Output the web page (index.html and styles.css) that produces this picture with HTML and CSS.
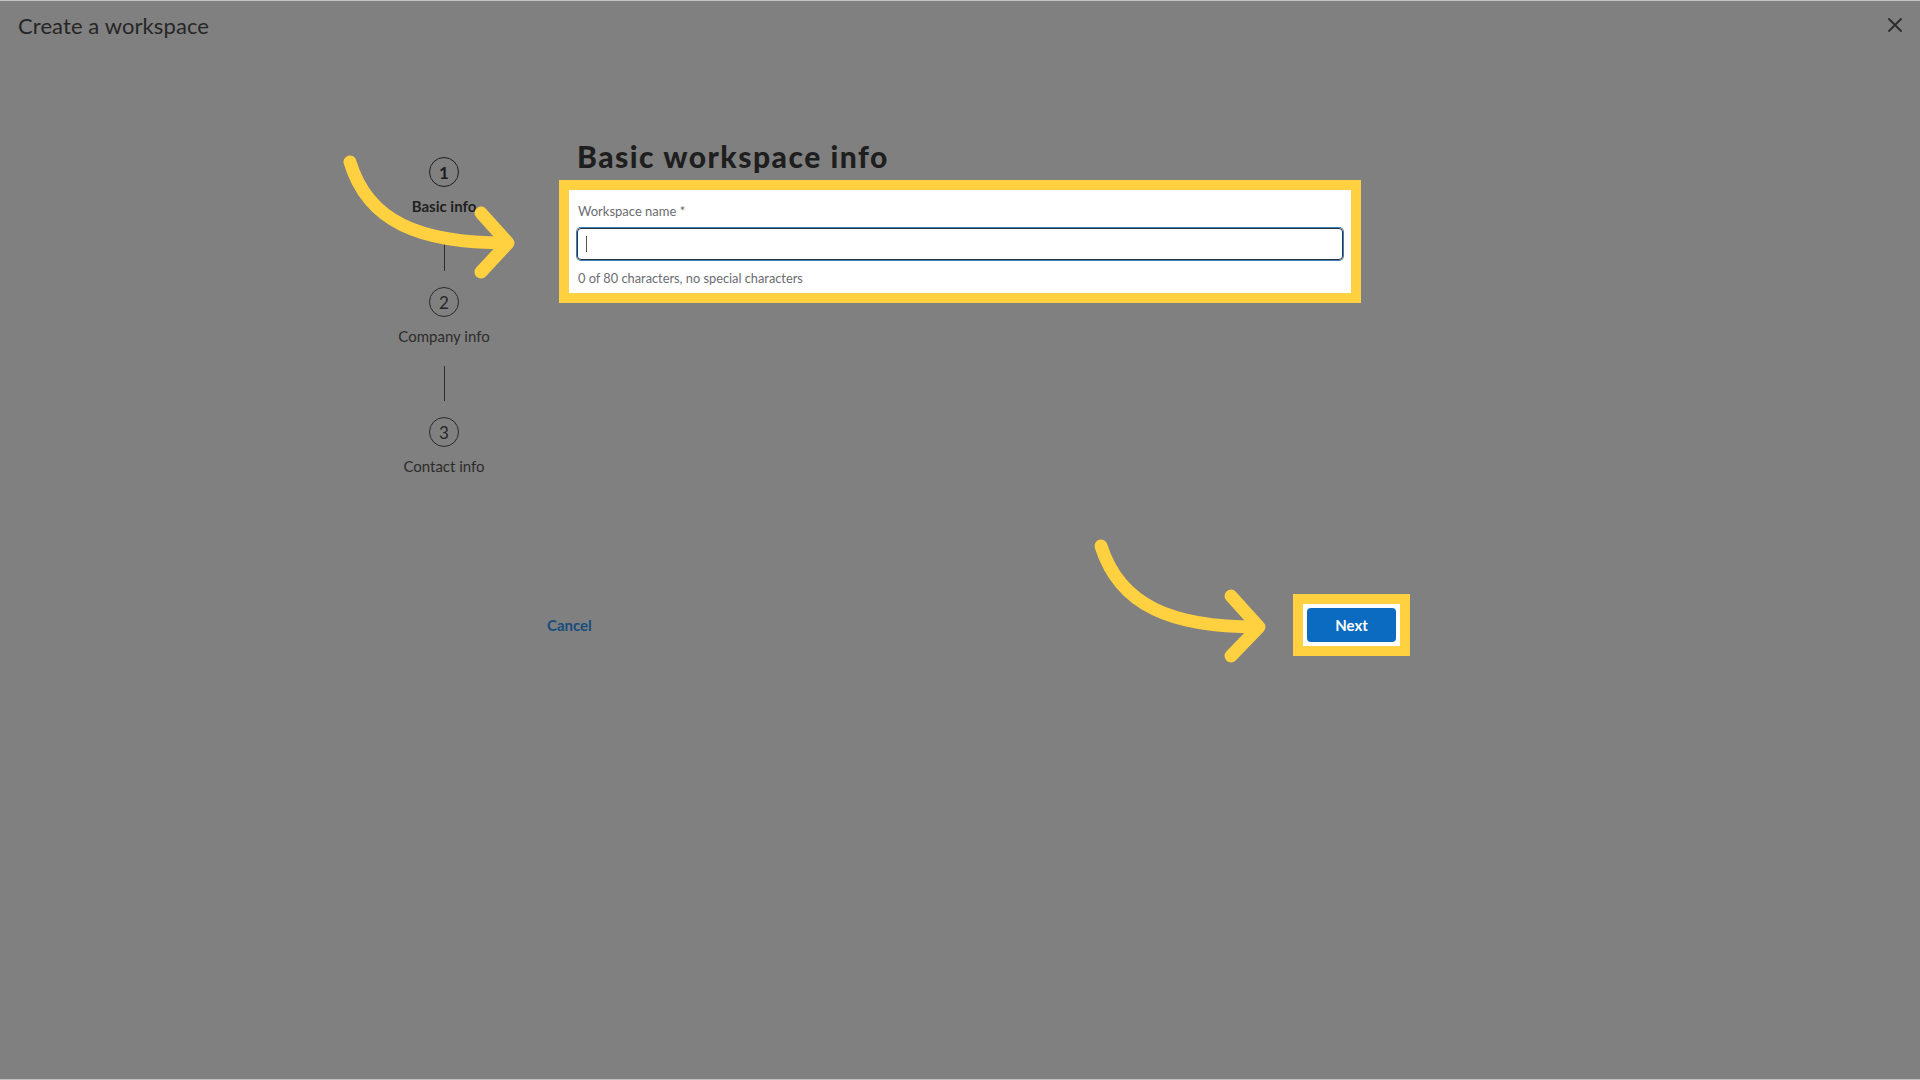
FILE: index.html
```html
<!DOCTYPE html>
<html lang="en">
<head>
<meta charset="utf-8">
<title>Create a workspace</title>
<link rel="stylesheet" href="styles.css">
</head>
<body>
<div class="page">
  <header class="topbar">
    <h1 class="title">Create a workspace</h1>
    <button class="close" aria-label="Close">
      <svg width="14" height="14" viewBox="0 0 14 14"><path d="M1 1 L13 13 M13 1 L1 13" stroke="#2b2b2b" stroke-width="1.8" fill="none" stroke-linecap="round"/></svg>
    </button>
  </header>
  <main class="wizard">
    <div class="row">
      <ol class="stepper">
        <li class="step active">
          <span class="circle">1</span>
          <span class="step-label">Basic info</span>
        </li>
        <li class="connector"></li>
        <li class="step">
          <span class="circle">2</span>
          <span class="step-label">Company info</span>
        </li>
        <li class="connector"></li>
        <li class="step">
          <span class="circle">3</span>
          <span class="step-label">Contact info</span>
        </li>
      </ol>
      <section class="content">
        <h2 class="heading">Basic workspace info</h2>
        <div class="highlight field">
          <label class="field-label">Workspace name *</label>
          <div class="input"><span class="caret"></span></div>
          <p class="helper">0 of 80 characters, no special characters</p>
        </div>
      </section>
    </div>
    <div class="footer">
      <a class="cancel" href="#">Cancel</a>
      <div class="highlight btn-wrap"><button class="next">Next</button></div>
    </div>
  </main>
</div>
<svg class="annotations" width="1920" height="1080" viewBox="0 0 1920 1080">
  <g fill="none" stroke="#ffd03f" stroke-width="13" stroke-linecap="round" stroke-linejoin="round">
    <path d="M350 162 C368 222 420 243 506 243"/>
    <path d="M481 213 L508 243 L481 272"/>
    <path d="M1101 546 C1120 606 1172 627 1257 627"/>
    <path d="M1231 596 L1259 627 L1231 656"/>
  </g>
</svg>
</body>
</html>
```
FILE: styles.css
```css
* { box-sizing: border-box; }
html, body { margin: 0; padding: 0; }
body {
  position: relative;
  width: 1920px;
  height: 1080px;
  overflow: hidden;
  font-family: Lato, "Noto Sans", "Liberation Sans", sans-serif;
  background: #808080;
}
.page {
  height: 1080px;
  border-top: 1px solid #c4c4c4;
  border-bottom: 1px solid #c0c0c0;
  background: #808080;
}
.topbar {
  height: 50px;
  display: flex;
  align-items: center;
  justify-content: space-between;
  padding: 0 18px 2px;
}
.title {
  margin: 0;
  font-size: 22px;
  line-height: 25px;
  font-weight: 400;
  letter-spacing: 0.1px;
  color: #262626;
}
.close {
  border: 0;
  background: none;
  padding: 0;
  width: 14px;
  height: 14px;
  display: flex;
}
.wizard { padding-top: 88px; }
.row {
  display: flex;
  align-items: flex-start;
  padding-left: 384px;
}
.stepper {
  list-style: none;
  margin: 0;
  padding: 18px 0 0;
  width: 120px;
  display: flex;
  flex-direction: column;
  align-items: center;
}
.step {
  display: flex;
  flex-direction: column;
  align-items: center;
}
.circle {
  width: 30px;
  height: 30px;
  border-radius: 50%;
  border: 1px solid #2a2a2a;
  display: flex;
  align-items: center;
  justify-content: center;
  font-size: 17px;
  color: #262626;
}
.step.active .circle {
  border-width: 1.7px;
  border-color: #1e1e1e;
  font-weight: 700;
  color: #1c1c1c;
}
.step-label {
  margin-top: 9px;
  font-size: 15px;
  line-height: 20px;
  color: #2c2c2c;
  white-space: nowrap;
}
.step.active .step-label { font-weight: 700; color: #1f1f1f; }
.connector {
  width: 1px;
  height: 35px;
  margin: 20px 0 16px;
  background: #2e2e2e;
}
.content {
  margin-left: 55px;
  width: 802px;
}
.heading {
  margin: 0 0 7px;
  padding-left: 18px;
  font-size: 30px;
  line-height: 34px;
  font-weight: 900;
  letter-spacing: 1.5px;
  color: #1e1e1e;
}
.highlight {
  border: 10px solid #ffd03f;
  background: #ffffff;
}
.field { padding: 12px 8px 6px; }
.field-label {
  display: block;
  padding-left: 1px;
  font-size: 13px;
  line-height: 18px;
  color: #6b6c72;
}
.input {
  margin-top: 8px;
  height: 32px;
  border: 1px solid #2c3440;
  border-radius: 4px;
  box-shadow: 0 0 0 1px #3c7cbf;
  display: flex;
  align-items: center;
  padding-left: 8px;
}
.caret {
  width: 1px;
  height: 16px;
  background: #555;
}
.helper {
  margin: 9px 0 0;
  padding-left: 1px;
  font-size: 12.8px;
  line-height: 18px;
  color: #6b6c72;
}
.footer {
  margin: 118px 0 0 547px;
  width: 863px;
  display: flex;
  align-items: center;
  justify-content: space-between;
}
.cancel {
  font-size: 15px;
  font-weight: 700;
  color: #174d7c;
  text-decoration: none;
}
.btn-wrap { padding: 4px; }
.next {
  display: block;
  width: 89px;
  height: 34px;
  border: 0;
  border-radius: 4px;
  background: #0b6bc0;
  color: #ffffff;
  font-family: Lato, "Noto Sans", "Liberation Sans", sans-serif;
  font-size: 15px;
  font-weight: 700;
}
.annotations {
  position: absolute;
  top: 0;
  left: 0;
  pointer-events: none;
}
```
